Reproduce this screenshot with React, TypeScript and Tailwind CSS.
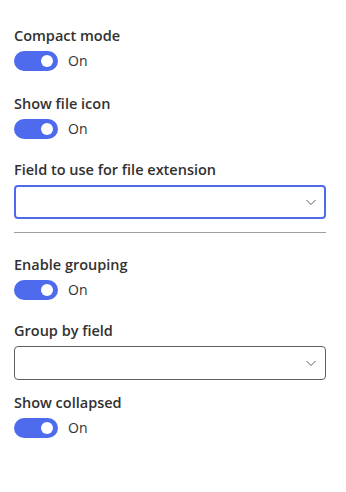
import React from "react"

function Toggle() {
  return (
    <div className="flex items-center">
      <div className="relative h-5 w-11 rounded-full bg-[#4f6bed]">
        <span className="absolute right-[5px] top-1 h-3 w-3 rounded-full bg-white" />
      </div>
      <span className="ml-2 pl-[2px] text-sm leading-5 text-[#323130]">On</span>
    </div>
  )
}

function Label({ children }: { children: React.ReactNode }) {
  return <div className="py-[5px] text-[14.5px] font-semibold leading-5 text-[#323130]">{children}</div>
}

function Chevron() {
  return (
    <svg width="12" height="12" viewBox="0 0 12 12" className="text-[#605e5c]">
      <path d="M1.5 4 L6 8.5 L10.5 4" fill="none" stroke="currentColor" strokeWidth="1" />
    </svg>
  )
}

function Dropdown({ focused }: { focused?: boolean }) {
  return (
    <div
      className={
        focused
          ? "flex h-[34px] items-center justify-end rounded-sm border-2 border-[#4f6bed] bg-white pr-[7px]"
          : "flex h-[34px] items-center justify-end rounded-sm border border-[#605e5c] bg-white pr-2"
      }
    >
      <Chevron />
    </div>
  )
}

export default function App() {
  return (
    <div
      className="min-h-[492px] w-[346px] bg-white pl-[14px] pr-5 pt-[21px]"
      style={{ fontFamily: '"Open Sans", "Noto Sans", sans-serif' }}
    >
      <div className="w-[312px]">
        <Label>Compact mode</Label>
        <Toggle />
        <div className="mt-[18px]">
          <Label>Show file icon</Label>
          <Toggle />
        </div>
        <div className="mt-4">
          <Label>Field to use for file extension</Label>
          <Dropdown focused />
        </div>
        <div className="mt-[13px] border-t border-[#a19f9d]" />
        <div className="mt-[17px]">
          <Label>Enable grouping</Label>
          <Toggle />
        </div>
        <div className="mt-4">
          <Label>Group by field</Label>
          <Dropdown />
        </div>
        <div className="mt-2">
          <Label>Show collapsed</Label>
          <Toggle />
        </div>
      </div>
    </div>
  )
}
